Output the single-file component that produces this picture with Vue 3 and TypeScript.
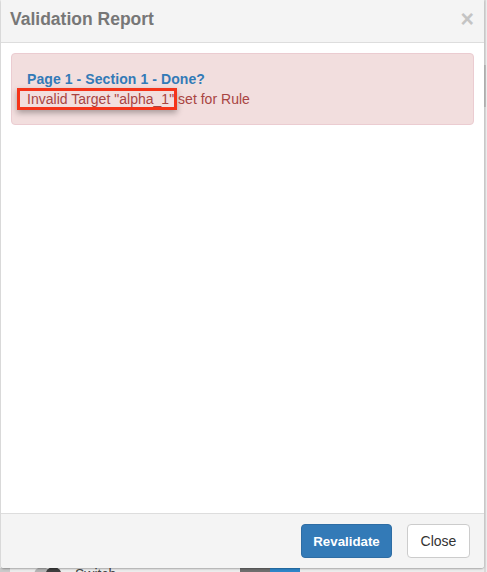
<script setup lang="ts">
const title = 'Validation Report'
</script>

<template>
  <div class="page">
    <span class="edge"></span>
    <span class="edge-dark"></span>
    <span class="corner"></span>
    <svg class="switch-icon" width="30" height="12" viewBox="0 0 30 12">
      <circle cx="9" cy="15" r="8" fill="#b4b4b4" />
      <circle cx="20.5" cy="15" r="8" fill="#3d3d3d" />
    </svg>
    <span class="switch-label">Switch</span>
    <span class="bar-gray"></span>
    <span class="bar-blue"></span>
    <div class="modal">
      <header class="head">
        <h4>{{ title }}</h4>
        <span class="x">×</span>
      </header>
      <main class="body">
        <div class="alert">
          <a class="link">Page 1 - Section 1 - Done?</a>
          <div class="msg"><span class="mark">Invalid Target "alpha_1"</span> set for Rule</div>
        </div>
      </main>
      <footer class="foot">
        <button class="btn primary">Revalidate</button>
        <button class="btn plain">Close</button>
      </footer>
    </div>
  </div>
</template>

<style>
html, body { margin: 0; background: #ececec; }
</style>

<style scoped>
.page {
  position: relative;
  width: 487px;
  height: 572px;
  overflow: hidden;
  background: #ececec;
  font-family: "Liberation Sans", Arial, sans-serif;
}
.edge { position: absolute; left: 484px; top: 0; width: 2px; height: 572px; background: #d9d9d9; }
.edge-dark { position: absolute; left: 484px; top: 65px; width: 2px; height: 42px; background: #bcbcbc; }
.corner { position: absolute; left: 0; top: 568px; width: 10px; height: 4px; background: #cacaca; }
.switch-icon { position: absolute; left: 33px; top: 560px; }
.switch-label { position: absolute; left: 75px; top: 566px; font-size: 14px; line-height: 16px; color: #444; }
.bar-gray { position: absolute; left: 240px; top: 568px; width: 30px; height: 4px; background: #6e6e6e; }
.bar-blue { position: absolute; left: 270px; top: 568px; width: 30px; height: 4px; background: #2e86c9; }
.modal {
  position: absolute;
  left: 1px;
  top: 0;
  width: 483px;
  height: 568px;
  display: flex;
  flex-direction: column;
  background: #fff;
  border-radius: 0 0 3px 3px;
  overflow: hidden;
  box-shadow: 0 1px 2px rgba(0,0,0,.3);
}
.head {
  box-sizing: border-box;
  height: 43px;
  flex: none;
  display: flex;
  align-items: center;
  justify-content: space-between;
  padding: 0 10px 3px 9px;
  background: #f4f4f4;
  border-bottom: 1px solid #ddd;
}
h4 { margin: 0; font-size: 17.5px; font-weight: 700; color: #777; }
.x { font-size: 23px; font-weight: 700; color: #c4c4c4; line-height: 1; }
.body { flex: 1; padding: 10px; }
.alert {
  height: 72px;
  padding: 15px 15px 0;
  box-sizing: border-box;
  background: #f2dede;
  border: 1px solid #ebccd1;
  border-radius: 4px;
  font-size: 14px;
  line-height: 20px;
  color: #a94442;
}
.link { display: block; font-weight: 700; color: #337ab7; letter-spacing: .08px; }
.msg { letter-spacing: .02px; }
.mark {
  outline: 3px solid #f5341a;
  box-shadow: 0 3px 6px 3px rgba(0,0,0,.3);
  padding: 0 0 0 7px;
  margin-left: -7px;
}
.foot {
  box-sizing: border-box;
  height: 55px;
  flex: none;
  display: flex;
  align-items: center;
  justify-content: flex-end;
  gap: 15px;
  padding: 0 14px;
  background: #f4f4f4;
  border-top: 1px solid #ddd;
}
.btn {
  box-sizing: border-box;
  height: 34px;
  padding: 0;
  font: 14px "Liberation Sans", Arial, sans-serif;
  border-radius: 4px;
  border: 1px solid #ccc;
  background: #fff;
  color: #333;
}
.plain { width: 63px; }
.primary { width: 91px; background: #337ab7; border-color: #2e6da4; color: #fff; font-weight: 700; font-size: 13.3px; }
</style>
